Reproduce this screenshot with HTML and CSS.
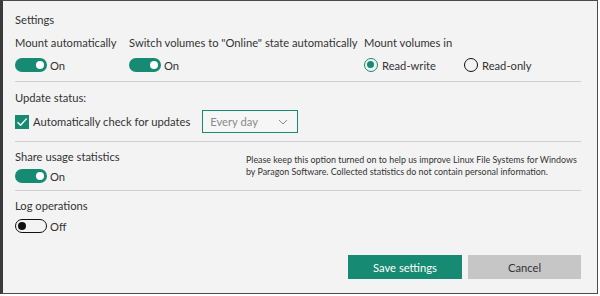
FILE: index.html
```html
<!DOCTYPE html>
<html>
<head>
<meta charset="utf-8">
<link rel="stylesheet" href="styles.css">
</head>
<body>
<div class="frame">
  <section class="sec sec-settings">
    <div class="title">Settings</div>
    <div class="cols">
      <div class="col col1">
        <div class="label">Mount automatically</div>
        <div class="ctl"><span class="toggle on"><span class="knob"></span></span><span class="state">On</span></div>
      </div>
      <div class="col col2">
        <div class="label">Switch volumes to "Online" state automatically</div>
        <div class="ctl"><span class="toggle on"><span class="knob"></span></span><span class="state">On</span></div>
      </div>
      <div class="col col3">
        <div class="label">Mount volumes in</div>
        <div class="ctl radios">
          <span class="opt first"><span class="radio checked"><span class="dot"></span></span><span class="rlabel">Read-write</span></span>
          <span class="opt"><span class="radio"></span><span class="rlabel">Read-only</span></span>
        </div>
      </div>
    </div>
  </section>
  <section class="sec sec-update">
    <div class="title">Update status:</div>
    <div class="ctl update-row">
      <span class="check"><svg width="14" height="14" viewBox="0 0 14 14"><path d="M2.5 7.2 L5.6 10.2 L11.6 3.6" fill="none" stroke="#fff" stroke-width="1.4"/></svg></span>
      <span class="clabel">Automatically check for updates</span>
      <span class="select"><span class="sel-text">Every day</span><svg class="chev" width="10" height="6" viewBox="0 0 10 6"><path d="M1 1 L5 5 L9 1" fill="none" stroke="#8a8a8a" stroke-width="1"/></svg></span>
    </div>
  </section>
  <section class="sec sec-share">
    <div class="share-left">
      <div class="title">Share usage statistics</div>
      <div class="ctl ctl-share"><span class="toggle on"><span class="knob"></span></span><span class="state">On</span></div>
    </div>
    <p class="desc">Please keep this option turned on to help us improve Linux File Systems for Windows<br>by Paragon Software. Collected statistics do not contain personal information.</p>
  </section>
  <section class="sec sec-log">
    <div class="title">Log operations</div>
    <div class="ctl ctl-log"><span class="toggle off"><span class="knob"></span></span><span class="state">Off</span></div>
  </section>
  <div class="buttons">
    <button class="btn save">Save settings</button>
    <button class="btn cancel">Cancel</button>
  </div>
</div>
</body>
</html>
```
FILE: styles.css
```css
* { box-sizing: border-box; }
html, body { margin: 0; padding: 0; background: #ffffff; }
body { font-family: Lato, "Noto Sans", sans-serif; color: #333; }
.frame {
  width: 598px;
  height: 294px;
  background: #f3f3f3;
  border: 1px solid #4a4a4a;
  border-left: 3px solid #3a3a3a;
  padding: 11px 16px 0 12px;
  font-size: 11.2px;
}
.sec { border-bottom: 1px solid #cfcfcf; }
.title, .label { line-height: 16px; height: 16px; white-space: nowrap; }
.sec-settings { padding-bottom: 9px; }
.cols { display: flex; margin-top: 7px; }
.col1 { width: 114px; }
.col2 { width: 235px; }
.ctl { display: flex; align-items: center; height: 14px; margin-top: 7px; }
.toggle {
  position: relative;
  width: 32px; height: 14px;
  border-radius: 7px;
  display: inline-block;
  flex: none;
}
.toggle.on { background: #168a73; }
.toggle.off { border: 1.5px solid #111; background: transparent; }
.knob { position: absolute; width: 8px; height: 8px; border-radius: 50%; top: 3px; }
.toggle.on .knob { background: #fff; right: 3px; }
.toggle.off .knob { background: #111; left: 2px; top: 1.5px; }
.state { margin-left: 3px; }
.opt { display: inline-flex; align-items: center; }
.opt.first { width: 100px; }
.radio {
  width: 14px; height: 14px; border-radius: 50%;
  border: 1.5px solid #111; position: relative; display: inline-block; flex: none;
}
.radio.checked { border-color: #168a73; }
.radio .dot { position: absolute; width: 7px; height: 7px; border-radius: 50%; background: #168a73; left: 2px; top: 2px; }
.rlabel { margin-left: 4px; }
.sec-update { padding-top: 8px; padding-bottom: 8px; }
.update-row { height: 23px; margin-top: 4px; }
.check { width: 14px; height: 14px; background: #168a73; display: inline-flex; flex: none; }
.clabel { margin-left: 4px; }
.select {
  margin-left: 12px;
  width: 96px; height: 23px;
  border: 1.5px solid #168a73;
  background: #f6f6f6;
  display: flex; align-items: center; justify-content: space-between;
  padding: 0 9px 0 7px;
  color: #8a8a8a;
}
.sec-share { display: flex; align-items: center; padding-top: 7px; padding-bottom: 7px; }
.share-left { width: 231px; flex: none; }
.ctl-share { margin-top: 4px; }
.desc { margin: 0; font-size: 8.9px; line-height: 12px; white-space: nowrap; color: #333; }
.sec-log { border-bottom: none; padding-top: 7px; }
.ctl-log { margin-top: 5px; }
.buttons { display: flex; justify-content: flex-end; gap: 6px; margin-top: 22px; }
.btn {
  height: 24px; border: none; font-family: inherit; font-size: 11.2px; padding: 0;
}
.save { width: 114px; background: #168a73; color: #fff; }
.cancel { width: 113px; background: #c6c6c6; color: #333; }
```
